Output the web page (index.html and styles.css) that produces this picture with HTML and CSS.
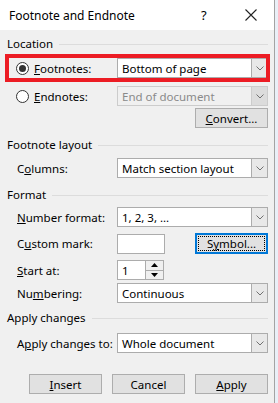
FILE: index.html
```html
<!DOCTYPE html>
<html lang="en">
<head>
    <meta charset="UTF-8">
    <title>Footnote and Endnote</title>
    <link rel="stylesheet" href="styles.css">
</head>
<body>
    <div class="dialog">
        <div class="titlebar">
            <span class="title">Footnote and Endnote</span>
            <span class="help">?</span>
            <svg class="close" width="12" height="12" viewBox="0 0 12 12">
                <path d="M0.5 0.5 L11.5 11.5 M11.5 0.5 L0.5 11.5" stroke="#222" stroke-width="1.1" fill="none"/>
            </svg>
        </div>

        <div class="content">
            <div class="group-head head-location"><span>Location</span></div>

            <div class="row radio-row row-footnotes">
                <span class="radio checked"></span>
                <span class="label"><u>F</u>ootnotes:</span>
                <div class="select"><span class="value">Bottom of page</span><span class="drop"></span></div>
                <div class="highlight"></div>
            </div>

            <div class="row radio-row row-endnotes">
                <span class="radio"></span>
                <span class="label"><u>E</u>ndnotes:</span>
                <div class="select disabled"><span class="value">End of document</span><span class="drop"></span></div>
            </div>

            <div class="row row-convert">
                <button class="btn"><u>C</u>onvert...</button>
            </div>

            <div class="group-head head-layout"><span>Footnote layout</span></div>

            <div class="row row-columns">
                <span class="label">C<u>o</u>lumns:</span>
                <div class="select"><span class="value">Match section layout</span><span class="drop"></span></div>
            </div>

            <div class="group-head head-format"><span>Format</span></div>

            <div class="row row-number">
                <span class="label"><u>N</u>umber format:</span>
                <div class="select"><span class="value">1, 2, 3, ...</span><span class="drop"></span></div>
            </div>

            <div class="row row-custom">
                <span class="label">C<u>u</u>stom mark:</span>
                <div class="textbox"></div>
                <button class="btn focused"><span class="focus-ring">S<u>y</u>mbol...</span></button>
            </div>

            <div class="row row-start">
                <span class="label"><u>S</u>tart at:</span>
                <div class="spinner">
                    <span class="value">1</span>
                    <span class="spin">
                        <span class="spin-btn up"></span>
                        <span class="spin-btn down"></span>
                    </span>
                </div>
            </div>

            <div class="row row-numbering">
                <span class="label">Nu<u>m</u>bering:</span>
                <div class="select"><span class="value">Continuous</span><span class="drop"></span></div>
            </div>

            <div class="group-head head-apply"><span>Apply changes</span></div>

            <div class="row row-apply">
                <span class="label">A<u>p</u>ply changes to:</span>
                <div class="select"><span class="value">Whole document</span><span class="drop"></span></div>
            </div>

            <div class="footer">
                <button class="btn"><u>I</u>nsert</button>
                <button class="btn">Cancel</button>
                <button class="btn"><u>A</u>pply</button>
            </div>
        </div>
    </div>
</body>
</html>
```

FILE: styles.css
```css
body {
    margin: 0;
    background: #e9eff7;
    font-family: 'Segoe UI', 'Noto Sans', sans-serif;
    font-size: 11.5px;
    color: #000;
}

u {
    text-decoration: underline;
    text-underline-offset: 1px;
}

.dialog {
    width: 274px;
    height: 403px;
    background: #f0f0f0;
    border-right: 1px solid #a3a3a3;
    display: flex;
    flex-direction: column;
}

.titlebar {
    height: 30px;
    background: #fff;
    display: flex;
    align-items: center;
    padding-left: 9px;
    flex-shrink: 0;
}

.title {
    font-size: 12px;
    flex: 1;
}

.help {
    font-size: 13px;
    width: 10px;
    margin-right: 34px;
}

.close {
    margin-right: 17px;
}

.content {
    padding: 0 6px 0 7px;
    display: flex;
    flex-direction: column;
}

/* section headers with the rule after the text */
.group-head {
    height: 16px;
    line-height: 16px;
    display: flex;
    align-items: center;
}

.group-head::after {
    content: '';
    flex: 1;
    height: 1px;
    background: #dcdcdc;
    margin-left: 6px;
}

.head-location { margin-top: 6px; }
.head-layout { margin-top: 9px; }
.head-format { margin-top: 9px; }
.head-apply { margin-top: 7px; }

.row {
    display: flex;
    align-items: center;
    height: 20px;
    padding-left: 10px;
    position: relative;
}

.row .label {
    width: 100px;
    flex-shrink: 0;
    white-space: nowrap;
}

.radio-row {
    padding-left: 9px;
}

.radio-row .label {
    width: 83px;
}

.radio {
    width: 11px;
    height: 11px;
    border: 1px solid #333;
    border-radius: 50%;
    background: #fff;
    margin-right: 5px;
    position: relative;
}

.radio.checked::after {
    content: '';
    position: absolute;
    left: 2px;
    top: 2px;
    width: 7px;
    height: 7px;
    border-radius: 50%;
    background: #333;
}

.row-footnotes { margin-top: 6px; }
.row-endnotes { margin-top: 8px; }
.row-convert { margin-top: 2px; justify-content: flex-end; }
.row-columns { margin-top: 5px; }
.row-number { margin-top: 4px; }
.row-custom { margin-top: 6px; height: 21px; }
.row-start { margin-top: 6px; }
.row-numbering { margin-top: 3px; }
.row-apply { margin-top: 7px; }

.select {
    flex: 1;
    height: 18px;
    border: 1px solid #acacac;
    background: #fff;
    display: flex;
    align-items: center;
}

.select .value {
    flex: 1;
    padding-left: 4px;
    white-space: nowrap;
    overflow: hidden;
}

.select .drop {
    width: 15px;
    height: 18px;
    border-left: 1px solid #acacac;
    background: #e8e8e8 url("data:image/svg+xml,%3Csvg xmlns='http://www.w3.org/2000/svg' width='8' height='5'%3E%3Cpath d='M0.5 0.5 L4 4 L7.5 0.5' stroke='%23707070' fill='none'/%3E%3C/svg%3E") no-repeat center;
}

.select.disabled {
    background: #f0f0f0;
    border-color: #cccccc;
    color: #8a8a8a;
}

.select.disabled .drop {
    border-left-color: #cccccc;
    background-color: #dcdcdc;
}

/* red annotation box drawn over the footnotes row */
.highlight {
    position: absolute;
    left: -2px;
    top: -4px;
    width: 257px;
    height: 20px;
    border: 4px solid #ec1c24;
    pointer-events: none;
}

.btn {
    width: 73px;
    height: 20px;
    border: 1px solid #adadad;
    background: #e1e1e1;
    font-family: inherit;
    font-size: 11.5px;
    color: #000;
    padding: 0;
    display: flex;
    align-items: center;
    justify-content: center;
}

.btn.focused {
    height: 21px;
    border: 2px solid #0078d7;
    margin-left: auto;
}

.focus-ring {
    border: 1px dotted #000;
    width: 65px;
    height: 13px;
    line-height: 13px;
    text-align: center;
}

.textbox {
    width: 46px;
    height: 18px;
    border: 1px solid #acacac;
    background: #fff;
}

.spinner {
    width: 45px;
    height: 18px;
    border: 1px solid #acacac;
    background: #fff;
    display: flex;
    align-items: center;
}

.spinner .value {
    flex: 1;
    padding-left: 4px;
}

.spin {
    width: 17px;
    height: 18px;
    display: flex;
    flex-direction: column;
    border-left: 1px solid #acacac;
}

.spin-btn {
    flex: 1;
    background: #f0f0f0 no-repeat center;
}

.spin-btn.up {
    border-bottom: 1px solid #acacac;
    background-image: url("data:image/svg+xml,%3Csvg xmlns='http://www.w3.org/2000/svg' width='7' height='4'%3E%3Cpath d='M0 4 L3.5 0 L7 4Z' fill='%23000'/%3E%3C/svg%3E");
}

.spin-btn.down {
    background-image: url("data:image/svg+xml,%3Csvg xmlns='http://www.w3.org/2000/svg' width='7' height='4'%3E%3Cpath d='M0 0 L3.5 4 L7 0Z' fill='%23000'/%3E%3C/svg%3E");
}

.footer {
    margin-top: 21px;
    display: flex;
    justify-content: flex-end;
    gap: 10px;
}
```
